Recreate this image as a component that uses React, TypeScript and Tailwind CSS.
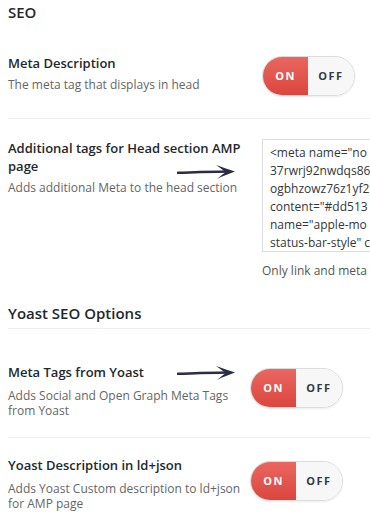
import React from "react";

const font = { fontFamily: '"Open Sans", "Noto Sans", sans-serif' };

function Toggle() {
  return (
    <div className="flex h-[40px] w-[93px] shrink-0 overflow-hidden rounded-full border border-[#dcdcdc] shadow-[0_1px_2px_rgba(0,0,0,0.08)]">
      <div className="flex w-[45px] items-center justify-center bg-gradient-to-b from-[#ea6660] to-[#da463d] text-[11px] font-bold tracking-[1.5px] text-white">
        ON
      </div>
      <div className="flex flex-1 items-center justify-center bg-[#f7f7f7] text-[11px] font-bold tracking-[1.5px] text-[#333a45]">
        OFF
      </div>
    </div>
  );
}

function Arrow({ className }: { className: string }) {
  return (
    <svg className={className} width="60" height="16" viewBox="0 0 60 16" fill="none">
      <path d="M1 8.8 C 15 8.4, 30 7.8, 50 7.5" stroke="#2a2d45" strokeWidth="2.6" strokeLinecap="round" />
      <path d="M39 1 C 46 3.5, 52 5.5, 58 7.6 C 52 9.8, 46 12, 40 15 C 43.5 12, 46.5 9.8, 48.5 8 C 45.5 5.5, 42.5 3.5, 39 1 Z" fill="#2a2d45" />
    </svg>
  );
}

export default function App() {
  return (
    <div className="relative h-[513px] w-[370px] overflow-hidden bg-white pl-2" style={font}>
      <h2 className="mt-[2px] text-[15px] font-semibold leading-5 text-[#23282d]">SEO</h2>

      <div className="mt-[32px] flex items-start">
        <div className="w-[254px] shrink-0">
          <div className="text-[13px] font-semibold leading-[18px] text-[#23282d]">Meta Description</div>
          <div className="mt-[4px] text-[12px] leading-[18px] text-[#666]">The meta tag that displays in head</div>
        </div>
        <div className="mt-[2px]">
          <Toggle />
        </div>
      </div>

      <div className="mt-[22px] border-t border-[#eeeeee]" />

      <div className="mt-[20px] flex items-start">
        <div className="w-[254px] shrink-0 pr-4">
          <div className="text-[13px] font-semibold leading-[18px] text-[#23282d]">
            Additional tags for Head section AMP page
          </div>
          <div className="mt-[4px] text-[12px] leading-[18px] text-[#666]">Adds additional Meta to the head section</div>
        </div>
        <div className="flex shrink-0 flex-col">
          <div className="h-[113px] w-[200px] overflow-hidden border border-[#dddddd] bg-white pl-[7px] pt-[4px] text-[12px] leading-[18px] whitespace-nowrap text-[#32373c]">
            <div>&lt;meta name="no</div>
            <div>37rwrj92nwdqs86</div>
            <div>ogbhzowz76z1yf2</div>
            <div>content="#dd513</div>
            <div>name="apple-mo</div>
            <div>status-bar-style" c</div>
          </div>
          <div className="mt-[10px] whitespace-nowrap text-[12px] leading-[18px] text-[#555]">
            Only link and meta t
          </div>
        </div>
      </div>

      <h2 className="mt-[23px] text-[15px] font-semibold leading-5 text-[#23282d]">Yoast SEO Options</h2>
      <div className="mt-[5px] border-t border-[#eeeeee]" />

      <div className="mt-[34px] flex items-start">
        <div className="w-[242px] shrink-0 pr-2">
          <div className="text-[13px] font-semibold leading-[18px] text-[#23282d]">Meta Tags from Yoast</div>
          <div className="mt-[7px] text-[12px] leading-[15px] text-[#666]">
            Adds Social and Open Graph Meta Tags from Yoast
          </div>
        </div>
        <div className="mt-[5px]">
          <Toggle />
        </div>
      </div>

      <div className="mt-[19px] border-t border-[#eeeeee]" />

      <div className="mt-[18px] flex items-start">
        <div className="w-[242px] shrink-0 pr-2">
          <div className="text-[13px] font-semibold leading-[18px] text-[#23282d]">Yoast Description in ld+json</div>
          <div className="mt-[7px] text-[12px] leading-[15px] text-[#666]">
            Adds Yoast Custom description to ld+json for AMP page
          </div>
        </div>
        <div className="mt-[5px]">
          <Toggle />
        </div>
      </div>

      <Arrow className="absolute left-[177px] top-[164px]" />
      <Arrow className="absolute left-[177px] top-[365px]" />
    </div>
  );
}
